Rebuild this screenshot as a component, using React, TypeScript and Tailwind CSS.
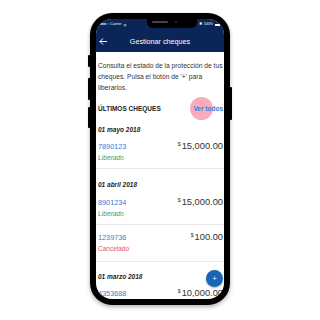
import React from "react";

function Amount({ value }: { value: string }) {
  return (
    <div className="flex items-start leading-[11px] text-[#333]">
      <span className="text-[5px] leading-[7px] mr-[1px]">$</span>
      <span className="text-[9.3px] leading-[11px]">{value}</span>
    </div>
  );
}

function Item({ num, status, amount, mt }: { num: string; status: "Liberado" | "Cancelado"; amount: string; mt: string }) {
  return (
    <div className={`flex justify-between pl-[2px] pr-[1px] ${mt}`}>
      <div className="flex flex-col">
        <span className="text-[7.3px] leading-[11px] text-[#2f7fd0]">{num}</span>
        {status === "Liberado" ? (
          <span className="text-[6.7px] leading-[11px] italic text-[#3fa15a]">Liberado</span>
        ) : (
          <span className="text-[6.5px] leading-[11px] text-[#ef4d6c]">Cancelado</span>
        )}
      </div>
      <Amount value={amount} />
    </div>
  );
}

function DateRow({ text, mt }: { text: string; mt: string }) {
  return (
    <div className={`pl-[2px] text-[6.5px] leading-[11px] font-bold italic text-[#222] ${mt}`}>{text}</div>
  );
}

function Sep({ mt }: { mt: string }) {
  return <div className={`h-[1px] bg-[#e9e9e9] ${mt}`} />;
}

export default function App() {
  return (
    <div className="w-[320px] h-[320px] bg-white overflow-hidden pt-[13px] pl-[90px] font-['Liberation_Sans',Arial,sans-serif]">
      <div className="relative w-[140px] h-[292px] rounded-[22px] bg-black p-[6px] shadow-[0_2px_4px_rgba(0,0,0,0.3)]">
        {/* side buttons */}
        <div className="absolute left-[-2px] top-[42px] w-[2px] h-[12px] bg-black rounded-l-[1px]" />
        <div className="absolute left-[-2px] top-[65px] w-[2px] h-[22px] bg-black rounded-l-[1px]" />
        <div className="absolute left-[-2px] top-[94px] w-[2px] h-[21px] bg-black rounded-l-[1px]" />
        <div className="absolute right-[-2px] top-[74px] w-[2px] h-[33px] bg-black rounded-r-[1px]" />

        <div className="relative w-full h-full rounded-[16px] overflow-hidden bg-white flex flex-col">
          {/* header */}
          <div className="bg-[#0b2559] h-[33px] flex flex-col shrink-0">
            <div className="h-[12px] flex items-center justify-between px-[4px] text-white text-[3.6px] leading-none">
              <div className="flex items-center gap-[1px]">
                <span className="tracking-[-0.3px]">●●●○○</span>
                <span>Carrier</span>
                <svg width="4" height="3" viewBox="0 0 8 6" className="ml-[1px]">
                  <path d="M0.5 2 Q4 -0.5 7.5 2 M1.8 3.3 Q4 1.6 6.2 3.3" stroke="white" strokeWidth="0.9" fill="none" />
                  <circle cx="4" cy="5" r="0.8" fill="white" />
                </svg>
              </div>
              <div className="flex items-center gap-[2px]">
                <span>✱</span>
                <span>100%</span>
                <span className="w-[5px] h-[2.5px] bg-white rounded-[0.5px]" />
              </div>
            </div>
            <div className="h-[21px] flex items-center px-[3px]">
              <svg width="8" height="7" viewBox="0 0 16 14" className="shrink-0">
                <path d="M15 7 H2 M7.5 1.5 L2 7 L7.5 12.5" stroke="white" strokeWidth="2" fill="none" strokeLinecap="round" strokeLinejoin="round" />
              </svg>
              <div className="flex-1 text-center text-white text-[7.2px] leading-none">Gestionar cheques</div>
              <div className="w-[8px] shrink-0" />
            </div>
          </div>

          {/* body */}
          <div className="flex flex-col">
            <div className="pl-[2px] pr-[1px] mt-[8px] text-[6.7px] leading-[11px] text-[#333]">
              Consulta el estado de la protección de tus
              <br />
              cheques. Pulsa el botón de '+' para
              <br />
              liberarlos.
            </div>
            <div className="relative flex justify-between items-center pl-[2px] pr-[1px] mt-[10px] h-[11px]">
              <span className="text-[6.5px] font-bold text-[#222] leading-[11px]">ÚLTIMOS CHEQUES</span>
              <div className="absolute left-[94px] top-[-6px] w-[23px] h-[23px] rounded-full bg-[rgba(244,92,122,0.5)]" />
              <span className="relative text-[6.5px] font-bold text-[#2f7fd0] leading-[11px]">Ver todos</span>
            </div>
            <DateRow text="01 mayo 2018" mt="mt-[10px]" />
            <Item num="7890123" status="Liberado" amount="15,000.00" mt="mt-[6px]" />
            <Sep mt="mt-[5px]" />
            <DateRow text="01 abril 2018" mt="mt-[10px]" />
            <Item num="8901234" status="Liberado" amount="15,000.00" mt="mt-[7px]" />
            <Sep mt="mt-[5px]" />
            <Item num="1239736" status="Cancelado" amount="100.00" mt="mt-[7px]" />
            <Sep mt="mt-[7px]" />
            <DateRow text="01 marzo 2018" mt="mt-[9px]" />
            <Item num="4353688" status="Liberado" amount="10,000.00" mt="mt-[6px]" />
          </div>

          {/* FAB */}
          <div className="absolute left-[110px] top-[251px] w-[17px] h-[17px] rounded-full bg-[#1866b9] flex items-center justify-center text-white text-[7px] leading-none shadow-[0_1px_2px_rgba(0,0,0,0.3)]">
            +
          </div>

          {/* notch */}
          <div className="absolute left-[51px] top-0 w-[50px] h-[9px] bg-black rounded-b-[6px]">
            <div className="absolute left-[5px] top-[2px] w-[16px] h-[1.5px] rounded-full bg-[#444]" />
            <div className="absolute left-[28px] top-[1.7px] w-[2.4px] h-[2.4px] rounded-full bg-[#333]" />
          </div>
        </div>
      </div>
    </div>
  );
}
